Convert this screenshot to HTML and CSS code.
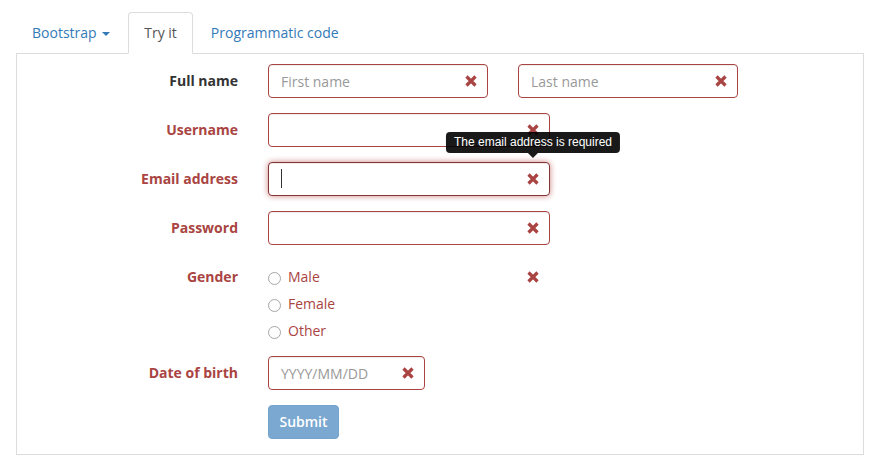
FILE: index.html
```html
<!DOCTYPE html>
<html lang="en">
<head>
<meta charset="utf-8">
<title>Try it</title>
<link rel="stylesheet" href="styles.css">
</head>
<body>
<div class="page">
  <ul class="tabs">
    <li class="tab-item"><a class="tab">Bootstrap <span class="caret"></span></a></li>
    <li class="tab-item active"><a class="tab">Try it</a></li>
    <li class="tab-item"><a class="tab">Programmatic code</a></li>
  </ul>
  <div class="panel">
    <form class="form">
      <div class="group">
        <label class="ctrl-label plain">Full name</label>
        <div class="fields">
          <div class="field w-name">
            <input class="input" type="text" placeholder="First name">
            <span class="icon"><svg width="12" height="12" viewBox="0 0 12 12"><path d="M1.5 1.5L10.5 10.5M10.5 1.5L1.5 10.5" stroke="#a94442" stroke-width="3.2"/></svg></span>
          </div>
          <div class="field w-name">
            <input class="input" type="text" placeholder="Last name">
            <span class="icon"><svg width="12" height="12" viewBox="0 0 12 12"><path d="M1.5 1.5L10.5 10.5M10.5 1.5L1.5 10.5" stroke="#a94442" stroke-width="3.2"/></svg></span>
          </div>
        </div>
      </div>
      <div class="group">
        <label class="ctrl-label">Username</label>
        <div class="fields">
          <div class="field w-wide">
            <input class="input" type="text">
            <span class="icon"><svg width="12" height="12" viewBox="0 0 12 12"><path d="M1.5 1.5L10.5 10.5M10.5 1.5L1.5 10.5" stroke="#a94442" stroke-width="3.2"/></svg></span>
          </div>
        </div>
      </div>
      <div class="group">
        <label class="ctrl-label">Email address</label>
        <div class="fields">
          <div class="field w-wide">
            <input class="input focused" type="text">
            <span class="caret-line"></span>
            <span class="icon"><svg width="12" height="12" viewBox="0 0 12 12"><path d="M1.5 1.5L10.5 10.5M10.5 1.5L1.5 10.5" stroke="#a94442" stroke-width="3.2"/></svg></span>
            <div class="tooltip"><div class="tooltip-inner">The email address is required</div><span class="tooltip-arrow"></span></div>
          </div>
        </div>
      </div>
      <div class="group">
        <label class="ctrl-label">Password</label>
        <div class="fields">
          <div class="field w-wide">
            <input class="input" type="password">
            <span class="icon"><svg width="12" height="12" viewBox="0 0 12 12"><path d="M1.5 1.5L10.5 10.5M10.5 1.5L1.5 10.5" stroke="#a94442" stroke-width="3.2"/></svg></span>
          </div>
        </div>
      </div>
      <div class="group">
        <label class="ctrl-label">Gender</label>
        <div class="fields">
          <div class="field w-wide radios">
            <label class="radio"><input class="radio-input" type="radio" name="gender"><span>Male</span></label>
            <label class="radio"><input class="radio-input" type="radio" name="gender"><span>Female</span></label>
            <label class="radio"><input class="radio-input" type="radio" name="gender"><span>Other</span></label>
            <span class="icon"><svg width="12" height="12" viewBox="0 0 12 12"><path d="M1.5 1.5L10.5 10.5M10.5 1.5L1.5 10.5" stroke="#a94442" stroke-width="3.2"/></svg></span>
          </div>
        </div>
      </div>
      <div class="group">
        <label class="ctrl-label">Date of birth</label>
        <div class="fields">
          <div class="field w-date">
            <input class="input" type="text" placeholder="YYYY/MM/DD">
            <span class="icon"><svg width="12" height="12" viewBox="0 0 12 12"><path d="M1.5 1.5L10.5 10.5M10.5 1.5L1.5 10.5" stroke="#a94442" stroke-width="3.2"/></svg></span>
          </div>
        </div>
      </div>
      <div class="group">
        <div class="ctrl-label"></div>
        <div class="fields">
          <button class="btn" type="button">Submit</button>
        </div>
      </div>
    </form>
  </div>
</div>
</body>
</html>
```

FILE: styles.css
```css
* { box-sizing: border-box; }

body {
  margin: 0;
  background: #fff;
  font-family: "Open Sans", "Liberation Sans", sans-serif;
  font-size: 14px;
  line-height: 20px;
  color: #333;
}

.page {
  width: 848px;
  margin-left: 16px;
  padding-top: 12px;
}

.tabs {
  display: flex;
  margin: 0;
  padding: 0;
  list-style: none;
  border-bottom: 1px solid #ddd;
}

.tab-item {
  margin-bottom: -1px;
}

.tab {
  display: block;
  margin-right: 2px;
  padding: 10px 15px;
  line-height: 20px;
  border: 1px solid transparent;
  border-radius: 4px 4px 0 0;
  color: #337ab7;
  text-decoration: none;
  cursor: pointer;
}

.tab-item.active .tab {
  color: #555;
  background: #fff;
  border-color: #ddd #ddd transparent;
}

.caret {
  display: inline-block;
  width: 0;
  height: 0;
  margin-left: 2px;
  vertical-align: middle;
  border-top: 4px solid #337ab7;
  border-left: 4px solid transparent;
  border-right: 4px solid transparent;
}

.panel {
  border: 1px solid #ddd;
  border-top: 0;
  padding: 10px 0 0;
}

.group {
  display: flex;
  margin-bottom: 15px;
}

.ctrl-label {
  width: 221px;
  margin-right: 30px;
  padding-top: 7px;
  text-align: right;
  font-weight: 700;
  color: #a94442;
  flex-shrink: 0;
}

.ctrl-label.plain {
  color: #333;
}

.fields {
  display: flex;
  gap: 30px;
}

.field {
  position: relative;
}

.w-name { width: 220px; }
.w-wide { width: 282px; }
.w-date { width: 157px; }

.input {
  display: block;
  width: 100%;
  height: 34px;
  margin: 0;
  padding: 6px 34px 6px 12px;
  font-family: "Open Sans", "Liberation Sans", sans-serif;
  font-size: 14px;
  line-height: 20px;
  color: #555;
  background: #fff;
  border: 1px solid #a94442;
  border-radius: 4px;
  box-shadow: inset 0 1px 1px rgba(0, 0, 0, 0.075);
  outline: none;
}

.input::placeholder {
  color: #999;
}

.input.focused {
  border-color: #843534;
  box-shadow: inset 0 1px 1px rgba(0, 0, 0, 0.075), 0 0 6px #ce8483;
}

.caret-line {
  position: absolute;
  left: 13px;
  top: 7px;
  width: 1px;
  height: 19px;
  background: #333;
}

.icon {
  position: absolute;
  top: 0;
  right: 0;
  width: 34px;
  height: 34px;
  display: flex;
  align-items: center;
  justify-content: center;
}

.tooltip {
  position: absolute;
  left: 265px;
  bottom: calc(100% + 9px);
  transform: translateX(-50%);
  z-index: 5;
  font-family: "Liberation Sans", Arial, sans-serif;
  font-size: 12px;
  white-space: nowrap;
}

.tooltip-inner {
  padding: 3px 8px;
  line-height: 15px;
  color: #fff;
  background: rgba(0, 0, 0, 0.9);
  border-radius: 4px;
}

.tooltip-arrow {
  position: absolute;
  left: 50%;
  bottom: -5px;
  margin-left: -5px;
  width: 0;
  height: 0;
  border-top: 5px solid rgba(0, 0, 0, 0.9);
  border-left: 5px solid transparent;
  border-right: 5px solid transparent;
}

.radios {
  display: flex;
  flex-direction: column;
}

.radio {
  display: flex;
  align-items: flex-start;
  padding-top: 7px;
  min-height: 27px;
  color: #a94442;
  cursor: pointer;
}

.radio-input {
  appearance: none;
  -webkit-appearance: none;
  width: 13px;
  height: 13px;
  margin: 5px 7px 0 0;
  border: 1px solid #a6a6a6;
  border-radius: 50%;
  background: #fff;
  flex-shrink: 0;
}

.btn {
  width: 71px;
  height: 34px;
  padding: 6px 0;
  font-family: "Open Sans", "Liberation Sans", sans-serif;
  font-size: 14px;
  font-weight: 600;
  line-height: 20px;
  text-align: center;
  color: #fff;
  background: #7aa8d0;
  border: 1px solid #76a3cb;
  border-radius: 4px;
  cursor: not-allowed;
}
```
